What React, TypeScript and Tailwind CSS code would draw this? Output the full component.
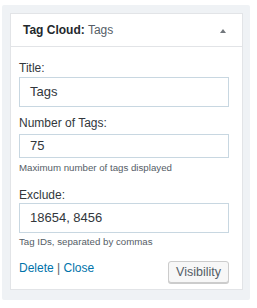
export default function App() {
  return (
    <div className="w-[257px] h-[308px] bg-white font-['Liberation_Sans',Arial,sans-serif] text-[12px] text-[#32373c]">
      <div className="ml-[2px] pt-[8px] pl-[8px] pr-[7px] pb-[10px] mt-[5px] w-[248px] bg-[#eff2f5] rounded-[2px]">
        {/* widget card */}
        <div className="bg-white border border-[#e2e4e7]">
          <div className="flex items-center justify-between h-[33px] pl-[12px] pr-[16px] border-b border-[#e2e4e7]">
            <h3 className="text-[12px] leading-[16px] text-[#23282d]">
              <span className="font-bold">Tag Cloud:</span>{" "}
              <span className="text-[#555d66]">Tags</span>
            </h3>
            <svg width="6" height="4" viewBox="0 0 6 4" className="mt-[1px]">
              <path d="M3 0 L6 4 L0 4 Z" fill="#72777c" />
            </svg>
          </div>

          <div className="pl-[8px] pr-[13px] pt-[13px] pb-[6px]">
            <label className="block leading-[16px]">Title:</label>
            <div className="mt-[1px] h-[30px] border border-[#c8d7e1] flex items-center px-[10px] text-[13px] text-[#32373c]">
              Tags
            </div>

            <label className="block leading-[16px] mt-[8px]">Number of Tags:</label>
            <div className="mt-[3px] h-[24px] border border-[#c8d7e1] flex items-center px-[10px] text-[13px] text-[#32373c]">
              75
            </div>
            <p className="text-[9.7px] leading-[14px] mt-[3px] text-[#555d66]">Maximum number of tags displayed</p>

            <label className="block leading-[16px] mt-[12px]">Exclude:</label>
            <div className="h-[30px] border border-[#c8d7e1] flex items-center px-[10px] text-[13px] text-[#32373c]">
              18654, 8456
            </div>
            <p className="text-[9.7px] leading-[14px] mt-[2px] text-[#555d66]">Tag IDs, separated by commas</p>

            <div className="flex items-start justify-between mt-[11px]">
              <div className="leading-[16px] text-[#0073aa]">
                <span>Delete</span>
                <span className="text-[#555d66]"> | </span>
                <span>Close</span>
              </div>
              <button className="h-[22px] w-[61px] mt-[1px] text-[12.5px] leading-[20px] text-[#555d66] bg-[#f7f7f7] border border-[#cccccc] rounded-[3px] shadow-[0_1px_0_#cccccc]">
                Visibility
              </button>
            </div>
          </div>
        </div>
      </div>
    </div>
  );
}
